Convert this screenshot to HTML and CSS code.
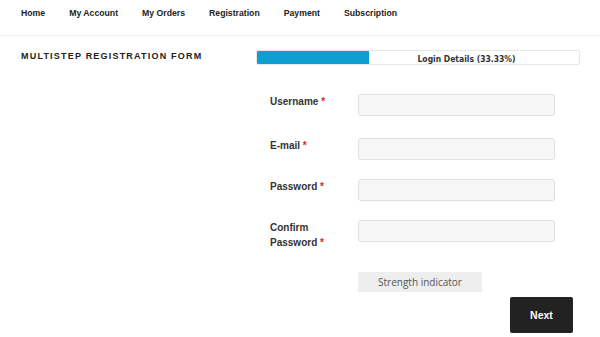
FILE: index.html
```html
<!DOCTYPE html>
<html>
<head>
<meta charset="utf-8">
<link rel="stylesheet" href="styles.css">
</head>
<body>
<nav class="nav">
  <a>Home</a><a>My Account</a><a>My Orders</a><a>Registration</a><a>Payment</a><a>Subscription</a>
</nav>
<main class="main">
  <div class="side"><h2 class="title">MULTISTEP REGISTRATION FORM</h2></div>
  <div class="content">
    <div class="progress">
      <div class="fill"></div>
      <div class="ptext">Login Details (33.33%)</div>
    </div>
    <form class="form">
      <div class="row"><label class="lbl">Username <span class="req">*</span></label><input class="inp" type="text"></div>
      <div class="row"><label class="lbl">E-mail <span class="req">*</span></label><input class="inp" type="text"></div>
      <div class="row"><label class="lbl">Password <span class="req">*</span></label><input class="inp" type="password"></div>
      <div class="row"><label class="lbl">Confirm Password <span class="req">*</span></label><input class="inp" type="password"></div>
      <div class="strength">Strength indicator</div>
      <div class="actions"><button class="next" type="button">Next</button></div>
    </form>
  </div>
</main>
</body>
</html>
```
FILE: styles.css
```css
html, body { margin: 0; padding: 0; background: #fff; }
body { font-family: "Liberation Sans", Arial, sans-serif; color: #333; }
.nav {
  display: flex;
  gap: 24px;
  align-items: center;
  padding: 0 0 9px 21px;
  border-bottom: 1px solid #eeeeee;
  box-sizing: border-box;
  height: 36px;
}
.nav a { font-size: 8.7px; font-weight: bold; color: #222; }
.main { display: flex; padding-top: 14px; }
.side { width: 256px; flex-shrink: 0; padding-left: 21px; box-sizing: border-box; }
.title { margin: 0; font-size: 9px; line-height: 12px; font-weight: bold; letter-spacing: 1.2px; color: #222; }
.content { width: 324px; flex-shrink: 0; }
.progress {
  display: flex;
  height: 15px;
  border: 1px solid #e6e6e6;
  box-sizing: border-box;
  border-radius: 2px;
}
.fill { width: 112px; background: #0e9fd0; border-radius: 1px 0 0 1px; }
.ptext {
  flex: 1;
  text-align: center;
  padding-right: 15px;
  font-family: "DejaVu Sans Condensed", "DejaVu Sans", sans-serif;
  font-weight: bold;
  font-size: 8.5px;
  line-height: 14px;
  padding-top: 1px;
  color: #333;
}
.form { margin: 29px 0 0 0; }
.row { display: flex; align-items: flex-start; margin-bottom: 19px; }
.row:first-child { margin-bottom: 22px; }
.row:nth-child(4) { margin-bottom: 22px; }
.lbl {
  width: 102px;
  flex-shrink: 0;
  padding-left: 14px;
  box-sizing: border-box;
  font-size: 10px;
  line-height: 15px;
  font-weight: bold;
  color: #333;
}
.req { color: #e01b1b; }
.inp {
  width: 197px;
  height: 22px;
  box-sizing: border-box;
  margin: 0;
  background: #f6f6f6;
  border: 1px solid #e0e0e0;
  border-radius: 3px;
}
.strength {
  margin-left: 102px;
  width: 124px;
  height: 20px;
  background: #eeeeee;
  font-family: "Open Sans", sans-serif;
  font-size: 10px;
  line-height: 20px;
  color: #555;
  text-align: center;
}
.actions { display: flex; justify-content: flex-end; margin-top: 5px; padding-right: 7px; }
.next {
  width: 63px;
  height: 36px;
  background: #222;
  color: #fff;
  border: 0;
  border-radius: 2px;
  font-family: "Liberation Sans", Arial, sans-serif;
  font-weight: bold;
  font-size: 10.5px;
  padding: 0;
}
```
